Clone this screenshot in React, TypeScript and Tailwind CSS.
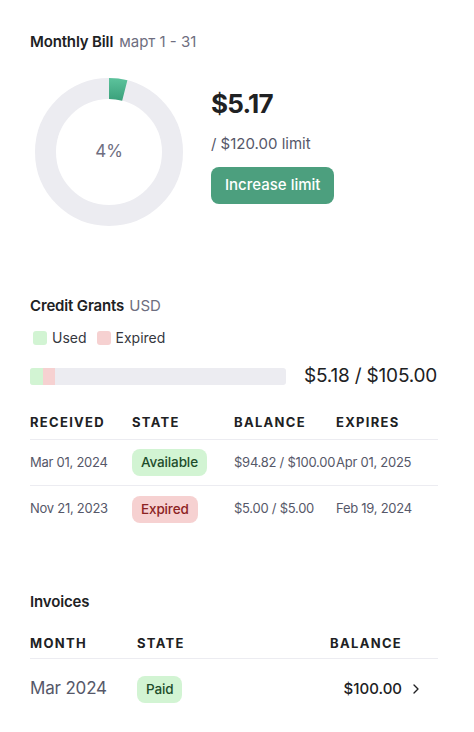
import React from "react";
import { ChevronRight } from "lucide-react";

const grants = [
  { received: "Mar 01, 2024", state: "Available", balance: "$94.82 / $100.00", expires: "Apr 01, 2025" },
  { received: "Nov 21, 2023", state: "Expired", balance: "$5.00 / $5.00", expires: "Feb 19, 2024" },
];

function Donut({ pct }: { pct: number }) {
  const size = 148;
  const c = size / 2;
  const outer = 74;
  const inner = 53;
  const a = (pct / 100) * Math.PI * 2;
  const x1 = c + outer * Math.sin(a);
  const y1 = c - outer * Math.cos(a);
  const x2 = c + inner * Math.sin(a);
  const y2 = c - inner * Math.cos(a);
  const arc = `M ${c} ${c - outer} A ${outer} ${outer} 0 0 1 ${x1} ${y1} L ${x2} ${y2} A ${inner} ${inner} 0 0 0 ${c} ${c - inner} Z`;
  return (
    <div className="relative w-[148px] h-[148px] shrink-0">
      <svg width={size} height={size} viewBox={`0 0 ${size} ${size}`}>
        <defs>
          <linearGradient id="g" x1="0" y1="0" x2="0" y2="1">
            <stop offset="0%" stopColor="#5cc39c" />
            <stop offset="100%" stopColor="#3aa07a" />
          </linearGradient>
        </defs>
        <circle cx={c} cy={c} r={(outer + inner) / 2} fill="none" stroke="#ececf1" strokeWidth={outer - inner} />
        <path d={arc} fill="url(#g)" />
      </svg>
      <div className="absolute inset-0 flex items-center justify-center text-[17px] text-[#6e6e80]">{pct}%</div>
    </div>
  );
}

function Badge({ kind, children }: { kind: "green" | "red"; children: React.ReactNode }) {
  const cls =
    kind === "green"
      ? "bg-[#d2f4d3] text-[#1e4d2b]"
      : "bg-[#f6d1d1] text-[#8c2323]";
  return (
    <span className={`inline-flex items-center h-[27px] px-[9px] rounded-lg text-[13.5px] font-medium tracking-[-0.01em] ${cls}`}>
      {children}
    </span>
  );
}

export default function App() {
  return (
    <div className="min-h-screen bg-white text-[#202123] pl-[30px] pr-[36px] pt-[31px] font-['Inter',sans-serif]">
      <div className="flex items-baseline gap-[6px]">
        <span className="text-[15px] font-semibold tracking-[-0.01em]">Monthly Bill</span>
        <span className="text-[15px] text-[#6e6e80]">март 1 - 31</span>
      </div>

      <div className="flex items-center gap-[28px] mt-[24px] ml-[5px]">
        <Donut pct={4} />
        <div className="flex flex-col items-start -mt-[12px]">
          <div className="text-[26px] leading-[32px] font-bold tracking-[-0.03em]">$5.17</div>
          <div className="mt-[14px] text-[15px] leading-[20px] text-[#565869]">/ $120.00 limit</div>
          <button className="mt-[13px] h-[37px] px-[14px] rounded-lg bg-[#4c9f7e] text-white text-[15px] font-medium">
            Increase limit
          </button>
        </div>
      </div>

      <div className="mt-[69px] flex items-baseline gap-[5px]">
        <span className="text-[15px] font-semibold tracking-[-0.01em]">Credit Grants</span>
        <span className="text-[15px] text-[#6e6e80]">USD</span>
      </div>
      <div className="mt-[10px] flex items-center gap-[10px] text-[14px] text-[#353740] ml-[3px]">
        <div className="flex items-center gap-[5px]">
          <span className="w-[14px] h-[14px] rounded-[3px] bg-[#d2f4d3]" />
          Used
        </div>
        <div className="flex items-center gap-[5px]">
          <span className="w-[14px] h-[14px] rounded-[3px] bg-[#f6d1d1]" />
          Expired
        </div>
      </div>
      <div className="mt-[14px] flex items-center gap-[18px]">
        <div className="w-[256px] h-[17px] rounded-[3px] bg-[#ececf1] flex overflow-hidden">
          <div className="w-[13px] bg-[#d2f4d3]" />
          <div className="w-[12px] bg-[#f6d1d1]" />
        </div>
        <span className="text-[19px] text-[#202123] tracking-[-0.01em]">$5.18 / $105.00</span>
      </div>

      <div className="mt-[22px]">
        <div className="grid grid-cols-4 pb-[7px] border-b border-[#ececf1] text-[13px] font-bold tracking-[0.1em]">
          <span>RECEIVED</span>
          <span>STATE</span>
          <span>BALANCE</span>
          <span>EXPIRES</span>
        </div>
        {grants.map((g) => (
          <div
            key={g.received}
            className="grid grid-cols-4 items-center h-[46px] border-b border-[#ececf1] last:border-b-0 text-[13px] tracking-[-0.02em] text-[#565869]"
          >
            <span>{g.received}</span>
            <span>
              <Badge kind={g.state === "Available" ? "green" : "red"}>{g.state}</Badge>
            </span>
            <span className="whitespace-nowrap">{g.balance}</span>
            <span>{g.expires}</span>
          </div>
        ))}
      </div>

      <div className="mt-[59px] text-[15px] font-semibold tracking-[-0.01em]">Invoices</div>
      <div className="mt-[20px]">
        <div className="grid grid-cols-[107px_1fr_auto_36px] pb-[5px] border-b border-[#ececf1] text-[13px] font-bold tracking-[0.1em]">
          <span>MONTH</span>
          <span>STATE</span>
          <span>BALANCE</span>
          <span />
        </div>
        <div className="grid grid-cols-[107px_1fr_auto_36px] items-center h-[60px]">
          <span className="text-[17px] tracking-[-0.01em] text-[#565869]">Mar 2024</span>
          <span>
            <Badge kind="green">Paid</Badge>
          </span>
          <span className="text-[15px] font-medium text-[#202123]">$100.00</span>
          <span className="pl-[6px] flex">
            <ChevronRight className="w-[16px] h-[16px] text-[#202123]" strokeWidth={2} />
          </span>
        </div>
      </div>
    </div>
  );
}
